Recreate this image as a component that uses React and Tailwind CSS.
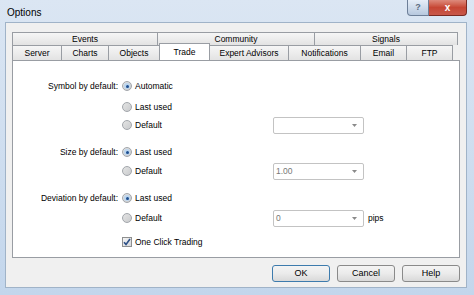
const font = { fontFamily: '"Liberation Sans", Arial, sans-serif' }

function Radio({ checked }) {
  return (
    <span className="w-[10px] h-[10px] rounded-full border border-[#a2a6ab] bg-gradient-to-br from-[#e4e4e4] to-[#c9cbcd] flex items-center justify-center shrink-0">
      {checked && <span className="w-[6px] h-[6px] rounded-full bg-[#bcd6ef] flex items-center justify-center"><span className="w-[3px] h-[3px] rounded-full bg-[#1d4e8f]" /></span>}
    </span>
  )
}

function Combo({ value = '' }) {
  return (
    <div className="w-[91px] h-[17px] border border-[#c3c3c3] rounded-[2px] bg-white flex items-center justify-between pl-[2px] pr-[6px] text-[#777]">
      <span>{value}</span>
      <svg width="5" height="3" viewBox="0 0 5 3"><path d="M0 0h5L2.5 3z" fill="#8a8a8a" /></svg>
    </div>
  )
}

function Row({ label, children, extra, className = '' }) {
  return (
    <div className={`flex items-center h-[18px] ${className}`}>
      <div className="w-[105px] text-right">{label}</div>
      <div className="w-[155px] pl-[4px] flex items-center gap-[3px]">{children}</div>
      {extra}
    </div>
  )
}

const topTabs = [['Events', 146], ['Community', 158], ['Signals', 144]]
const tabs = [['Server', 50], ['Charts', 48], ['Objects', 52], ['Trade', 51], ['Expert Advisors', 80], ['Notifications', 73], ['Email', 47], ['FTP', 47]]

function Button({ children, focus }) {
  return (
    <button className={`w-[58px] h-[17px] rounded-[3px] border ${focus ? 'border-[#3d7bad]' : 'border-[#8a8a8a]'} bg-gradient-to-b from-[#f4f4f4] via-[#ebebeb] to-[#d9d9d9] text-[9px] text-black`}>
      {children}
    </button>
  )
}

export default function App() {
  return (
    <div className="w-[474px] h-[295px] bg-gradient-to-b from-[#dbe6f3] to-[#c3d6ec] flex flex-col overflow-hidden" style={font}>
      <div className="h-[22px] flex items-start pl-[7px] pr-[7px]">
        <span className="mt-[5px] text-[10px] text-black">Options</span>
        <div className="ml-auto flex">
          <div className="w-[22px] h-[16px] rounded-bl-[4px] border border-t-0 border-[#6d7f98] bg-gradient-to-b from-[#e6eef8] to-[#b7c8de] flex items-center justify-center text-[9px] font-bold text-[#5a6b80]">?</div>
          <div className="w-[38px] h-[16px] rounded-br-[4px] border border-l-0 border-t-0 border-[#7a2a22] bg-gradient-to-b from-[#dd8a7c] via-[#c64634] to-[#c8584a] flex items-center justify-center text-[10px] font-bold text-white">x</div>
        </div>
      </div>
      <div className="flex-1 ml-[5px] mr-[7px] mb-[7px] bg-[#f0f0f0] border border-[#a0b3c8] flex flex-col px-[6px] pt-[9px] text-[8.5px] text-black">
        <div className="flex h-[13px]">
          {topTabs.map(([t, w]) => (
            <div key={t} style={{ width: w }} className="border border-b-0 border-[#999da3] -ml-px first:ml-0 bg-gradient-to-b from-[#f6f6f6] to-[#e3e3e3] flex items-center justify-center">{t}</div>
          ))}
        </div>
        <div className="flex items-end h-[17px] -mt-[2px] relative z-10">
          {tabs.map(([t, w]) => t === 'Trade' ? (
            <div key={t} style={{ width: w }} className="h-[17px] -ml-px border border-b-0 border-[#999da3] bg-white flex items-start pt-[2px] justify-center">{t}</div>
          ) : (
            <div key={t} style={{ width: w }} className="h-[15px] -ml-px first:ml-0 border border-b-0 border-[#999da3] bg-gradient-to-b from-[#f6f6f6] to-[#e3e3e3] flex items-center justify-center">{t}</div>
          ))}
        </div>
        <div className="h-[198px] border border-[#999da3] bg-white pt-[16px] flex flex-col">
          <Row label="Symbol by default:"><Radio checked />Automatic</Row>
          <Row label="" className="mt-[3px]"><Radio />Last used</Row>
          <Row label="" extra={<Combo />}><Radio />Default</Row>
          <Row label="Size by default:" className="mt-[9px]"><Radio checked />Last used</Row>
          <Row label="" className="mt-[1px]" extra={<Combo value="1.00" />}><Radio />Default</Row>
          <Row label="Deviation by default:" className="mt-[9px]"><Radio checked />Last used</Row>
          <Row label="" className="mt-[2px]" extra={<><Combo value="0" /><span className="ml-[4px]">pips</span></>}><Radio />Default</Row>
          <Row label="" className="mt-[6px]">
            <span className="w-[10px] h-[10px] border border-[#8e8f8f] bg-gradient-to-br from-[#f4f4f4] to-[#d6d8db] flex items-center justify-center shrink-0">
              <svg width="8" height="8" viewBox="0 0 8 8"><path d="M1 4.2l2 2.2L7 1" stroke="#2c4f86" strokeWidth="1.6" fill="none" /></svg>
            </span>
            One Click Trading
          </Row>
        </div>
        <div className="flex justify-end gap-[7px] mt-[7px] pr-[0px]">
          <Button focus>OK</Button>
          <Button>Cancel</Button>
          <Button>Help</Button>
        </div>
      </div>
    </div>
  )
}
